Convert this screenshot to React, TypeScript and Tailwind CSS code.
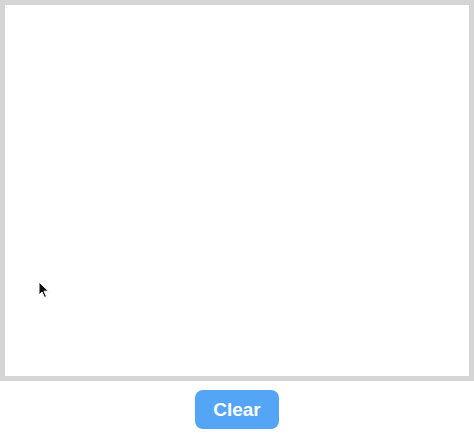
export default function App() {
  return (
    <div className="w-[474px] bg-white font-['Liberation_Sans',Arial,sans-serif]">
      {/* drawing canvas */}
      <div className="relative h-[381px] border-[5px] border-[#d5d5d5] bg-white">
        <svg
          className="absolute left-[33px] top-[276px]"
          width="12"
          height="18"
          viewBox="0 0 12 18"
        >
          <path
            d="M1 1 L1 14 L4 11 L6.5 16.5 L8.5 15.5 L6 10.2 L10.5 10.2 Z"
            fill="#111"
            stroke="#fff"
            strokeWidth="1"
            strokeLinejoin="round"
          />
        </svg>
      </div>
      <div className="flex justify-center pt-[9px] pb-[8px]">
        <button className="w-[84px] h-[39px] rounded-lg bg-[#54a5f6] text-white text-[19px] font-bold leading-none">
          Clear
        </button>
      </div>
    </div>
  );
}
